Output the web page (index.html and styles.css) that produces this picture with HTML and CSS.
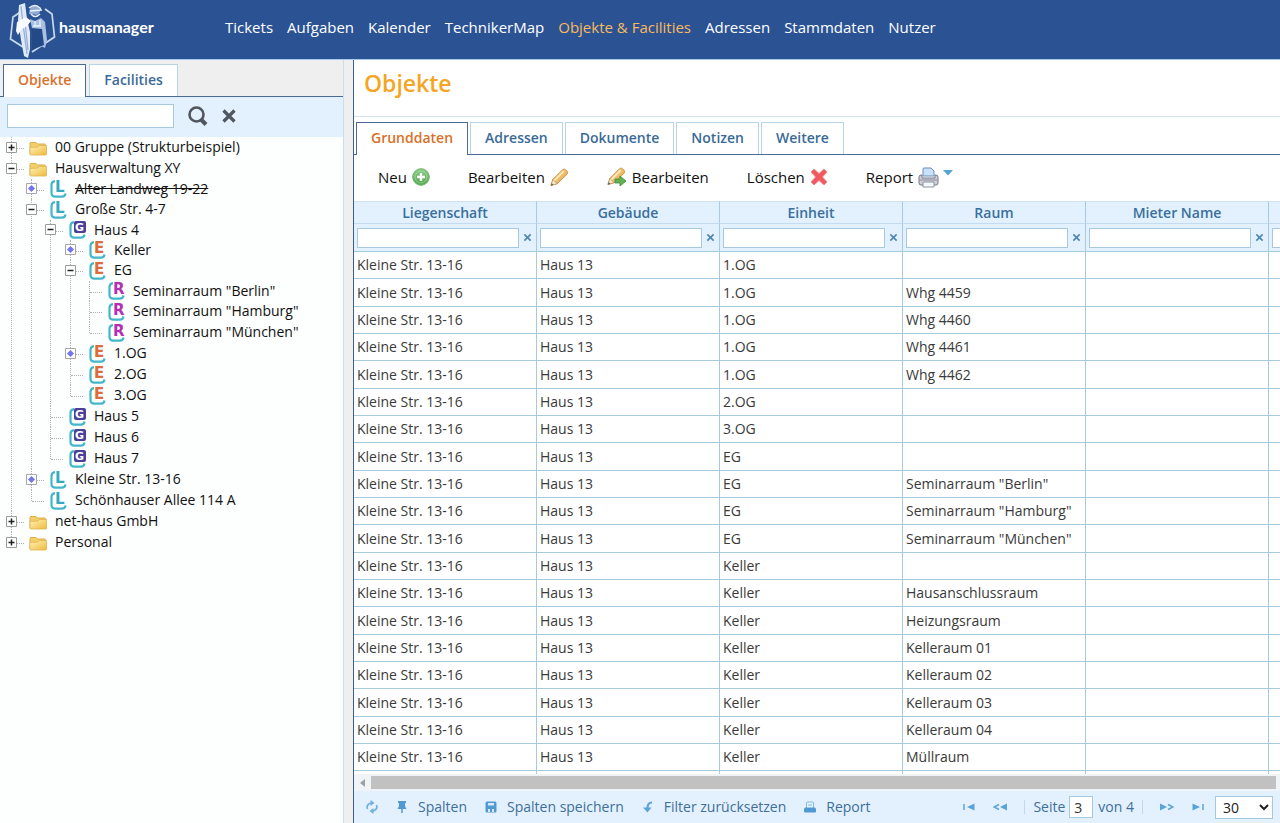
FILE: index.html
```
<!DOCTYPE html>
<html lang="de">
<head>
  <meta charset="UTF-8">
  <title>hausmanager - Objekte</title>
  <link rel="stylesheet" href="styles.css">
</head>
<body>
  <!-- Icons -->
  <svg class="sprite" aria-hidden="true">
    <defs>
      <linearGradient id="gFolder" x1="0" y1="0" x2="1" y2="1">
        <stop offset="0" stop-color="#fff3b8"/><stop offset="1" stop-color="#efb93c"/>
      </linearGradient>
      <linearGradient id="gPencil" x1="0" y1="0" x2="1" y2="1">
        <stop offset="0" stop-color="#fbe3a4"/><stop offset="1" stop-color="#e59a35"/>
      </linearGradient>
      <linearGradient id="gGreen" x1="0" y1="0" x2="0" y2="1">
        <stop offset="0" stop-color="#8fd08a"/><stop offset="1" stop-color="#4fa349"/>
      </linearGradient>
    </defs>
    <symbol id="folder" viewBox="0 0 18 15">
      <path d="M1 2.500Q1 1.500 2 1.500H7L8.500 3H15.500Q16.500 3 16.500 4V13H1Z" fill="#f3cf6a" stroke="#dcae4a"/>
      <path d="M1 13.500V6.500L9 6L10.500 4.500H17.500V13Q17.500 14 16.500 14H1.500Z" fill="url(#gFolder)" stroke="#e0b452" stroke-width=".8"/>
    </symbol>
    <symbol id="bracket" viewBox="0 0 18 18">
      <path d="M5 1.200Q1.500 1.500 1.500 5V13Q1.500 16.600 5.500 16.600H12Q15 16.600 15.500 13.500" fill="none" stroke="#45b6ca" stroke-width="2.200"/>
    </symbol>
    <symbol id="plus" viewBox="0 0 11 11">
      <path d="M.5 .5H10.500V10.500H.5Z" fill="#fff" stroke="#9c9c9c"/><path d="M2.500 5.500H8.500M5.500 2.500V8.500" stroke="#222" stroke-width="1.500"/>
    </symbol>
    <symbol id="minus" viewBox="0 0 11 11">
      <path d="M.5 .5H10.500V10.500H.5Z" fill="#fff" stroke="#9c9c9c"/><path d="M2.500 5.500H8.500" stroke="#222" stroke-width="1.500"/>
    </symbol>
    <symbol id="lazy" viewBox="0 0 11 11">
      <path d="M.5 .5H10.500V10.500H.5Z" fill="#fff" stroke="#a5a5b5"/><path d="M5.500 2L9 5.500L5.500 9L2 5.500Z" fill="#7474f0"/>
    </symbol>
    <symbol id="cross" viewBox="0 0 10 10">
      <path d="M1.500 1.500L8.500 8.500M8.500 1.500L1.500 8.500" fill="none" stroke="currentColor" stroke-width="1.800"/>
    </symbol>
    <symbol id="pencil" viewBox="0 0 20 20">
      <path d="M1 18.500L3 12L13.500 1.500Q15 .5 16.500 2L18 3.500Q19.200 5 18 6.500L7.500 16.500Z" fill="url(#gPencil)" stroke="#c88a3c" stroke-width=".9"/>
      <path d="M4.500 13.500L14.500 3.500" stroke="#fff3cf" stroke-width="1.500"/>
      <path d="M3 12L7.500 16.500L1 18.500Z" fill="#f7e6cc" stroke="#b98b57" stroke-width=".7"/>
      <path d="M1 18.500L1.800 16L3.500 17.700Z" fill="#555"/>
    </symbol>
  </svg>

  <header class="header">
    <a href="#" class="logo">
      <svg width="48" height="56" viewBox="0 0 48 56">
        <path d="M13 9L4 15L1.500 37L14 45M36 7L43 12L45.500 35L23 50" fill="none" stroke="#c7daf1" stroke-width="1.700"/>
        <path d="M20 12Q20 4 26 3Q31 4 31 10L28 13L22 12Z" fill="#8fabd6"/>
        <path d="M20 6Q26 1 31 6L32 8L21 9M22 12Q26 17 31 12" fill="none" stroke="#e9f0fa" stroke-width="1.500"/>
        <path d="M21 17L26 19L32 16L36 20L38 38L36 46L32 44L33 27L23 26Z" fill="#a9c0e2"/>
        <path d="M23 27H33L35 43L23 48Z" fill="#234a87"/>
        <path d="M10 3L16 1L18 17L21 30L21 47L19 56L15 54L12 38L9 18Z" fill="#dfe9f7"/>
        <path d="M12 4L14 22L18 52M16 20L19 48" fill="none" stroke="#91acd4" stroke-width="1.200"/>
        <path d="M8 20L17 15L22 19L18 24L12 28L9 33L7 29Z" fill="#f8fbff"/>
        <path d="M24 24H32M26 19V24M31 18V24" stroke="#e9f0fa" stroke-width="1.300"/>
      </svg>
      <span>hausmanager</span>
    </a>
    <nav class="nav">
      <a href="#">Tickets</a>
      <a href="#">Aufgaben</a>
      <a href="#">Kalender</a>
      <a href="#">TechnikerMap</a>
      <a href="#" class="active">Objekte &amp; Facilities</a>
      <a href="#">Adressen</a>
      <a href="#">Stammdaten</a>
      <a href="#">Nutzer</a>
    </nav>
  </header>

  <div class="layout">
    <!-- Baum links -->
    <aside class="sidebar">
      <div class="tabs side-tabs">
        <button class="tab active">Objekte</button>
        <button class="tab">Facilities</button>
      </div>
      <div class="search">
        <input type="text" aria-label="Suche">
        <button aria-label="Suchen"><svg width="20" height="20" viewBox="0 0 20 20"><circle cx="8.500" cy="8.500" r="7" fill="none" stroke="#50555e" stroke-width="2.600"/><path d="M13 13.500L18 18.500" stroke="#50555e" stroke-width="4"/></svg></button>
        <button class="clear" aria-label="Leeren"><svg width="14" height="14" viewBox="0 0 14 14"><path d="M1.500 1.500L12.500 12.500M12.500 1.500L1.500 12.500" stroke="#50555e" stroke-width="3.200"/></svg></button>
      </div>
      <ul class="tree">
        <li><div class="node"><svg class="tg"><use href="#plus"/></svg><svg class="folder"><use href="#folder"/></svg>00 Gruppe (Strukturbeispiel)</div></li>
        <li><div class="node"><svg class="tg"><use href="#minus"/></svg><svg class="folder"><use href="#folder"/></svg>Hausverwaltung XY</div>
          <ul>
            <li><div class="node"><svg class="tg"><use href="#lazy"/></svg><svg class="type l"><use href="#bracket"/><text x="5" y="12">L</text></svg><s>Alter Landweg 19-22</s></div></li>
            <li><div class="node"><svg class="tg"><use href="#minus"/></svg><svg class="type l"><use href="#bracket"/><text x="5" y="12">L</text></svg>Große Str. 4-7</div>
              <ul>
                <li><div class="node"><svg class="tg"><use href="#minus"/></svg><svg class="type g"><use href="#bracket"/><rect x="5" width="12" height="12" rx="2"/><text x="6" y="10">G</text></svg>Haus 4</div>
                  <ul>
                    <li><div class="node"><svg class="tg"><use href="#lazy"/></svg><svg class="type e"><use href="#bracket"/><text x="5" y="12">E</text></svg>Keller</div></li>
                    <li><div class="node"><svg class="tg"><use href="#minus"/></svg><svg class="type e"><use href="#bracket"/><text x="5" y="12">E</text></svg>EG</div>
                      <ul>
                        <li><div class="node leaf"><svg class="type r"><use href="#bracket"/><text x="5" y="12">R</text></svg>Seminarraum "Berlin"</div></li>
                        <li><div class="node leaf"><svg class="type r"><use href="#bracket"/><text x="5" y="12">R</text></svg>Seminarraum "Hamburg"</div></li>
                        <li><div class="node leaf"><svg class="type r"><use href="#bracket"/><text x="5" y="12">R</text></svg>Seminarraum "München"</div></li>
                      </ul>
                    </li>
                    <li><div class="node"><svg class="tg"><use href="#lazy"/></svg><svg class="type e"><use href="#bracket"/><text x="5" y="12">E</text></svg>1.OG</div></li>
                    <li><div class="node leaf"><svg class="type e"><use href="#bracket"/><text x="5" y="12">E</text></svg>2.OG</div></li>
                    <li><div class="node leaf"><svg class="type e"><use href="#bracket"/><text x="5" y="12">E</text></svg>3.OG</div></li>
                  </ul>
                </li>
                <li><div class="node leaf"><svg class="type g"><use href="#bracket"/><rect x="5" width="12" height="12" rx="2"/><text x="6" y="10">G</text></svg>Haus 5</div></li>
                <li><div class="node leaf"><svg class="type g"><use href="#bracket"/><rect x="5" width="12" height="12" rx="2"/><text x="6" y="10">G</text></svg>Haus 6</div></li>
                <li><div class="node leaf"><svg class="type g"><use href="#bracket"/><rect x="5" width="12" height="12" rx="2"/><text x="6" y="10">G</text></svg>Haus 7</div></li>
              </ul>
            </li>
            <li><div class="node"><svg class="tg"><use href="#lazy"/></svg><svg class="type l"><use href="#bracket"/><text x="5" y="12">L</text></svg>Kleine Str. 13-16</div></li>
            <li><div class="node leaf"><svg class="type l"><use href="#bracket"/><text x="5" y="12">L</text></svg>Schönhauser Allee 114 A</div></li>
          </ul>
        </li>
        <li><div class="node"><svg class="tg"><use href="#plus"/></svg><svg class="folder"><use href="#folder"/></svg>net-haus GmbH</div></li>
        <li><div class="node"><svg class="tg"><use href="#plus"/></svg><svg class="folder"><use href="#folder"/></svg>Personal</div></li>
      </ul>
    </aside>
    <div class="splitter"></div>

    <main class="main">
      <h1>Objekte</h1>
      <div class="tabs main-tabs">
        <button class="tab active">Grunddaten</button>
        <button class="tab">Adressen</button>
        <button class="tab">Dokumente</button>
        <button class="tab">Notizen</button>
        <button class="tab">Weitere</button>
      </div>

      <div class="toolbar">
        <button>Neu
          <svg width="18" height="18" viewBox="0 0 18 18"><circle cx="9" cy="9" r="8.300" fill="url(#gGreen)" stroke="#70b36b"/><circle cx="9" cy="9" r="6" fill="none" stroke="#a8dca3" stroke-width=".7"/><path d="M9 5V13M5 9H13" stroke="#fff" stroke-width="2.400"/></svg>
        </button>
        <button>Bearbeiten <svg width="19" height="19"><use href="#pencil"/></svg></button>
        <button>
          <svg width="20" height="20" viewBox="0 0 20 20"><use href="#pencil" width="19" height="19"/><path d="M8 12H13V9L19 14L13 19V16H8Z" fill="#63b154" stroke="#3d8d35" stroke-width=".8"/></svg>
          Bearbeiten</button>
        <button>Löschen
          <svg width="18" height="18" viewBox="0 0 18 18"><path d="M4 1L9 5.500L14 1L17 4L12.500 9L17 14L14 17L9 12.500L4 17L1 14L5.500 9L1 4Z" fill="#ee5a5f" stroke="#f28b8b" stroke-linejoin="round"/></svg>
        </button>
        <button>Report
          <svg width="21" height="21" viewBox="0 0 21 21"><path d="M5 9V2Q5 1 6 1H13L16 4V9Z" fill="#c9e2fb" stroke="#6f8fb5"/><path d="M1 10Q1 8 3 8H4V11H17V8H18Q20 8 20 10V16Q20 18 18 18H3Q1 18 1 16Z" fill="#d0d0da" stroke="#777786"/><path d="M1.500 13H19.500" stroke="#8d8d9b"/><path d="M5 15H16V20H5Z" fill="#f4f6fa" stroke="#8d94a5"/></svg>
          <svg class="caret" width="10" height="6" viewBox="0 0 10 6"><path d="M0 0H10L5 5.500Z" fill="#55a3d4"/></svg>
        </button>
      </div>

      <div class="grid">
        <table>
          <thead>
            <tr class="labels"><th>Liegenschaft</th><th>Gebäude</th><th>Einheit</th><th>Raum</th><th>Mieter Name</th><th></th></tr>
            <tr class="filters">
              <td><div><input type="text" aria-label="Liegenschaft"><button aria-label="Filter leeren"><svg><use href="#cross"/></svg></button></div></td>
              <td><div><input type="text" aria-label="Gebäude"><button aria-label="Filter leeren"><svg><use href="#cross"/></svg></button></div></td>
              <td><div><input type="text" aria-label="Einheit"><button aria-label="Filter leeren"><svg><use href="#cross"/></svg></button></div></td>
              <td><div><input type="text" aria-label="Raum"><button aria-label="Filter leeren"><svg><use href="#cross"/></svg></button></div></td>
              <td><div><input type="text" aria-label="Mieter Name"><button aria-label="Filter leeren"><svg><use href="#cross"/></svg></button></div></td>
              <td><div><input type="text" aria-label="Filter"><button aria-label="Filter leeren"><svg><use href="#cross"/></svg></button></div></td>
            </tr>
          </thead>
          <tbody>
            <tr><td>Kleine Str. 13-16</td><td>Haus 13</td><td>1.OG</td><td></td><td></td><td></td></tr>
            <tr><td>Kleine Str. 13-16</td><td>Haus 13</td><td>1.OG</td><td>Whg 4459</td><td></td><td></td></tr>
            <tr><td>Kleine Str. 13-16</td><td>Haus 13</td><td>1.OG</td><td>Whg 4460</td><td></td><td></td></tr>
            <tr><td>Kleine Str. 13-16</td><td>Haus 13</td><td>1.OG</td><td>Whg 4461</td><td></td><td></td></tr>
            <tr><td>Kleine Str. 13-16</td><td>Haus 13</td><td>1.OG</td><td>Whg 4462</td><td></td><td></td></tr>
            <tr><td>Kleine Str. 13-16</td><td>Haus 13</td><td>2.OG</td><td></td><td></td><td></td></tr>
            <tr><td>Kleine Str. 13-16</td><td>Haus 13</td><td>3.OG</td><td></td><td></td><td></td></tr>
            <tr><td>Kleine Str. 13-16</td><td>Haus 13</td><td>EG</td><td></td><td></td><td></td></tr>
            <tr><td>Kleine Str. 13-16</td><td>Haus 13</td><td>EG</td><td>Seminarraum "Berlin"</td><td></td><td></td></tr>
            <tr><td>Kleine Str. 13-16</td><td>Haus 13</td><td>EG</td><td>Seminarraum "Hamburg"</td><td></td><td></td></tr>
            <tr><td>Kleine Str. 13-16</td><td>Haus 13</td><td>EG</td><td>Seminarraum "München"</td><td></td><td></td></tr>
            <tr><td>Kleine Str. 13-16</td><td>Haus 13</td><td>Keller</td><td></td><td></td><td></td></tr>
            <tr><td>Kleine Str. 13-16</td><td>Haus 13</td><td>Keller</td><td>Hausanschlussraum</td><td></td><td></td></tr>
            <tr><td>Kleine Str. 13-16</td><td>Haus 13</td><td>Keller</td><td>Heizungsraum</td><td></td><td></td></tr>
            <tr><td>Kleine Str. 13-16</td><td>Haus 13</td><td>Keller</td><td>Kelleraum 01</td><td></td><td></td></tr>
            <tr><td>Kleine Str. 13-16</td><td>Haus 13</td><td>Keller</td><td>Kelleraum 02</td><td></td><td></td></tr>
            <tr><td>Kleine Str. 13-16</td><td>Haus 13</td><td>Keller</td><td>Kelleraum 03</td><td></td><td></td></tr>
            <tr><td>Kleine Str. 13-16</td><td>Haus 13</td><td>Keller</td><td>Kelleraum 04</td><td></td><td></td></tr>
            <tr><td>Kleine Str. 13-16</td><td>Haus 13</td><td>Keller</td><td>Müllraum</td><td></td><td></td></tr>
            <tr><td></td><td></td><td></td><td></td><td></td><td></td></tr>
          </tbody>
        </table>
      </div>

      <div class="scrollbar">
        <svg width="5" height="8" viewBox="0 0 5 8"><path d="M5 0V8L0 4Z" fill="#a0a0a0"/></svg>
        <div class="thumb"></div>
      </div>

      <!-- Fußzeile der Tabelle -->
      <div class="pager">
        <div class="pager-left">
          <button aria-label="Neu laden"><svg width="12" height="14" viewBox="0 0 12 14"><path d="M1.500 9Q0 4.500 5 3M10.500 5Q12 9.500 7 11" fill="none" stroke="#6fb0de" stroke-width="1.700"/><path d="M4.500 0L8.500 3L4.500 6ZM7.500 8L3.500 11L7.500 14Z" fill="#6fb0de"/></svg></button>
          <button><svg width="12" height="12" viewBox="0 0 12 12"><path d="M2 0H10V2H9V5L10.500 8H1.500L3 5V2H2Z" fill="#4f9ad3"/><path d="M6 8V12" stroke="#4f9ad3" stroke-width="1.500"/></svg>Spalten</button>
          <button><svg width="12" height="12" viewBox="0 0 12 12"><rect x=".5" y=".5" width="11" height="11" rx="1.500" fill="#4f9ad3"/><path d="M3 2H9V4.500H3ZM3 8H5V11H3ZM7 8H9V11H7Z" fill="#d8eafa"/></svg>Spalten speichern</button>
          <button><svg width="12" height="12" viewBox="0 0 12 12"><path d="M10 1.500Q5.500 1.500 5.500 7" fill="none" stroke="#5aa3d8" stroke-width="2.200"/><path d="M1 6.500H9.500L5.500 11.500Z" fill="#5aa3d8"/></svg>Filter zurücksetzen</button>
          <button><svg width="12" height="12" viewBox="0 0 12 12"><path d="M2.500 7V2Q2.500 1 3.500 1H8.500Q9.500 1 9.500 2V7" fill="#e8f4fd" stroke="#7db9e4"/><path d="M4 4H8" stroke="#7db9e4"/><path d="M1 6.500H11L12 8V10.500Q12 11.500 11 11.500H1Q0 11.500 0 10.500V8Z" fill="#4f9ad3"/></svg>Report</button>
        </div>
        <div class="pager-right">
          <button aria-label="Erste Seite"><svg width="12" height="8" viewBox="0 0 12 8"><path d="M1 1V7" stroke="#5aa3d8" stroke-width="1.500"/><path d="M11.500 .5V7.500L4 4Z" fill="#5aa3d8"/></svg></button>
          <button aria-label="Zurück"><svg width="14" height="8" viewBox="0 0 14 8"><path d="M6 1.500L1 4L6 6.500" fill="none" stroke="#5aa3d8" stroke-width="1.500"/><path d="M14 .5V7.500L7 4Z" fill="#5aa3d8"/></svg></button>
          <i></i>
          <label for="page">Seite</label><input type="text" id="page" value="3"><span>von 4</span>
          <i></i>
          <button aria-label="Weiter"><svg width="14" height="8" viewBox="0 0 14 8"><path d="M8 1.500L13 4L8 6.500" fill="none" stroke="#5aa3d8" stroke-width="1.500"/><path d="M0 .5V7.500L7 4Z" fill="#5aa3d8"/></svg></button>
          <button aria-label="Letzte Seite"><svg width="12" height="8" viewBox="0 0 12 8"><path d="M11 1V7" stroke="#5aa3d8" stroke-width="1.500"/><path d="M.5 .5V7.500L8 4Z" fill="#5aa3d8"/></svg></button>
          <select aria-label="Zeilen pro Seite"><option>30</option><option>60</option></select>
        </div>
      </div>
    </main>
  </div>
</body>
</html>
```
FILE: styles.css
```
* {
  box-sizing: border-box;
}
body {
  margin: 0;
  height: 100vh;
  display: flex;
  flex-direction: column;
  overflow: hidden;
  font-family: "Open Sans", "Noto Sans", sans-serif;
  font-size: 14px;
  line-height: 20px;
  color: #222;
  background-color: #fff;
}
button, input, select {
  font: inherit;
  color: inherit;
}
button {
  background: none;
  border: 0;
  padding: 0;
  cursor: pointer;
}
input {
  border: 1px solid #a6c9e2;
  background-color: #fff;
}
svg {
  display: block;
  flex: none;
}
.sprite {
  position: absolute;
  width: 0;
  height: 0;
}

/* Kopfzeile */
.header {
  display: flex;
  align-items: center;
  height: 60px;
  flex: none;
  background-color: #2b5394;
  border-bottom: 1px solid #a9c8ee;
}
.logo {
  display: flex;
  align-items: center;
  width: 225px;
  padding-left: 9px;
  gap: 2px;
  color: #fff;
  text-decoration: none;
  font-family: Lato, sans-serif;
  font-size: 16px;
  font-weight: bold;
}
.logo span {
  padding-bottom: 6px;
}
.nav {
  display: flex;
  gap: 14px;
  padding-bottom: 6px;
  font-size: 15px;
}
.nav a {
  color: #fff;
  text-decoration: none;
}
.nav .active {
  color: #f9b95c;
}

.layout {
  display: flex;
  flex: 1;
  min-height: 0;
}

/* Reiter */
.tabs {
  display: flex;
  gap: 2px;
  padding-left: 2px;
  border-bottom: 1px solid #4c6a94;
}
.tab {
  height: 32px;
  padding: 0 14px 2px;
  background-color: #fff;
  border: 1px solid #b8d4e8;
  border-bottom: 0;
  color: #3a6a96;
  font-weight: 600;
}
.tab.active {
  border-color: #4c6a94;
  color: #d9702a;
  margin-bottom: -1px;
  height: 33px;
}

/* Linke Seite */
.sidebar {
  width: 343px;
  flex: none;
  background-color: #fdfefe;
}
.side-tabs {
  gap: 3px;
  padding: 4px 0 0 3px;
  background-color: #efefef;
}
.search {
  display: flex;
  align-items: center;
  height: 40px;
  padding: 0 0 2px 7px;
  background-color: #e2f1fd;
}
.search input {
  width: 167px;
  height: 24px;
  margin-right: 14px;
}
.clear {
  margin-left: 14px;
}
.splitter {
  width: 10px;
  flex: none;
  background-color: #efefef;
  border-left: 1px solid #c9dff0;
}

/* Baum */
.tree, .tree ul {
  list-style: none;
  margin: 0;
  padding: 0;
}
.tree {
  padding-left: 6px;
}
.tree ul {
  padding-left: 20px;
}
.tree ul ul {
  padding-left: 19px;
}
.tree ul ul ul {
  padding-left: 20px;
}
.tree ul ul ul ul {
  padding-left: 19px;
}
.tree li {
  position: relative;
}
/* gepunktete Linien */
.tree li::before {
  content: "";
  position: absolute;
  left: 5px;
  top: 0;
  bottom: 0;
  border-left: 1px dotted #b0b0b0;
}
.tree li:last-child::before {
  bottom: auto;
  height: 11px;
}
.node {
  position: relative;
  display: flex;
  align-items: center;
  height: 21px;
  padding-bottom: 1px;
  white-space: nowrap;
  color: #111;
}
.node::before {
  content: "";
  position: absolute;
  left: 6px;
  top: 11px;
  width: 12px;
  border-top: 1px dotted #b0b0b0;
}
.tree ul li:first-child > .node {
  height: 20px;
}
.tg {
  position: relative;
  width: 11px;
  height: 11px;
  margin-right: 12px;
}
.leaf {
  padding-left: 23px;
}
.folder {
  width: 18px;
  height: 15px;
  margin: 2px 8px 0 0;
}
.type {
  width: 18px;
  height: 18px;
  margin: 1px 7px 0 1px;
  overflow: visible;
}
.type text {
  font-family: "DejaVu Sans", sans-serif;
  font-size: 15px;
  font-weight: bold;
}
.l text { fill: #35a9c0; }
.e text { fill: #dc6b3f; }
.r text { fill: #b52fb5; }
.g rect { fill: #4a3f9b; }
.type.g text {
  fill: #fff;
  font-size: 11px;
}

/* Hauptbereich */
.main {
  flex: 1;
  min-width: 0;
  display: flex;
  flex-direction: column;
  border-left: 1px solid #3c5d92;
}
h1 {
  margin: 0;
  height: 57px;
  flex: none;
  padding: 7px 0 0 10px;
  font-size: 23px;
  line-height: 32px;
  font-weight: 600;
  color: #f5a524;
  border-bottom: 1px solid #cfe2f0;
}
.main-tabs {
  padding-top: 5px;
  flex: none;
}
.toolbar {
  display: flex;
  align-items: center;
  gap: 38px;
  height: 46px;
  flex: none;
  padding: 0 0 2px 24px;
  font-size: 15px;
  color: #111;
}
.toolbar button {
  display: flex;
  align-items: center;
  gap: 5px;
}
.toolbar .caret {
  margin: 0 0 8px -1px;
}

/* Tabelle */
.grid {
  flex: 1;
  min-height: 0;
  overflow: hidden;
}
table {
  width: 1098px;
  table-layout: fixed;
  border-collapse: separate;
  border-spacing: 0;
}
th, td {
  padding: 0 3px;
  border-right: 1px solid #a6cbe0;
  border-bottom: 1px solid #a6cbe0;
}
thead {
  background-color: #e2f1fd;
}
.labels th {
  height: 23px;
  border-top: 1px solid #cfe2f0;
  border-bottom-color: #c5dcf0;
  color: #3a6f9e;
  font-weight: 600;
}
.filters td {
  height: 28px;
}
.filters div {
  display: flex;
  align-items: center;
  gap: 4px;
}
.filters input {
  width: 162px;
  height: 20px;
}
.filters svg {
  width: 9px;
  height: 9px;
  color: #4f86b0;
}
tbody td {
  height: 27px;
  white-space: nowrap;
  color: #3a3a3a;
}
tbody tr:nth-child(3n+2) td {
  height: 28px;
}
.scrollbar {
  display: flex;
  align-items: center;
  height: 17px;
  flex: none;
  padding: 0 4px 0 6px;
  gap: 6px;
  background-color: #f1f4f7;
}
.thumb {
  flex: 1;
  height: 13px;
  background-color: #c1c1c1;
}

/* Blättern */
.pager {
  display: flex;
  align-items: center;
  justify-content: space-between;
  height: 32px;
  flex: none;
  padding: 0 7px 0 12px;
  background-color: #e2f1fd;
  color: #3f6f9a;
}
.pager-left, .pager-right {
  display: flex;
  align-items: center;
}
.pager-left {
  gap: 18px;
}
.pager-left button {
  display: flex;
  align-items: center;
  gap: 10px;
}
.pager-right button {
  margin: 0 9px;
}
.pager-right i {
  width: 1px;
  height: 14px;
  margin: 0 8px;
  background-color: #c3d9ea;
}
.pager-right input {
  width: 24px;
  height: 22px;
  padding: 0 4px;
  margin: 0 5px 0 4px;
  color: #333;
}
.pager-right select {
  width: 58px;
  height: 23px;
  margin-left: 2px;
  padding: 0 3px;
  border: 1px solid #a6c9e2;
  background-color: #fff;
  color: #222;
}
```
